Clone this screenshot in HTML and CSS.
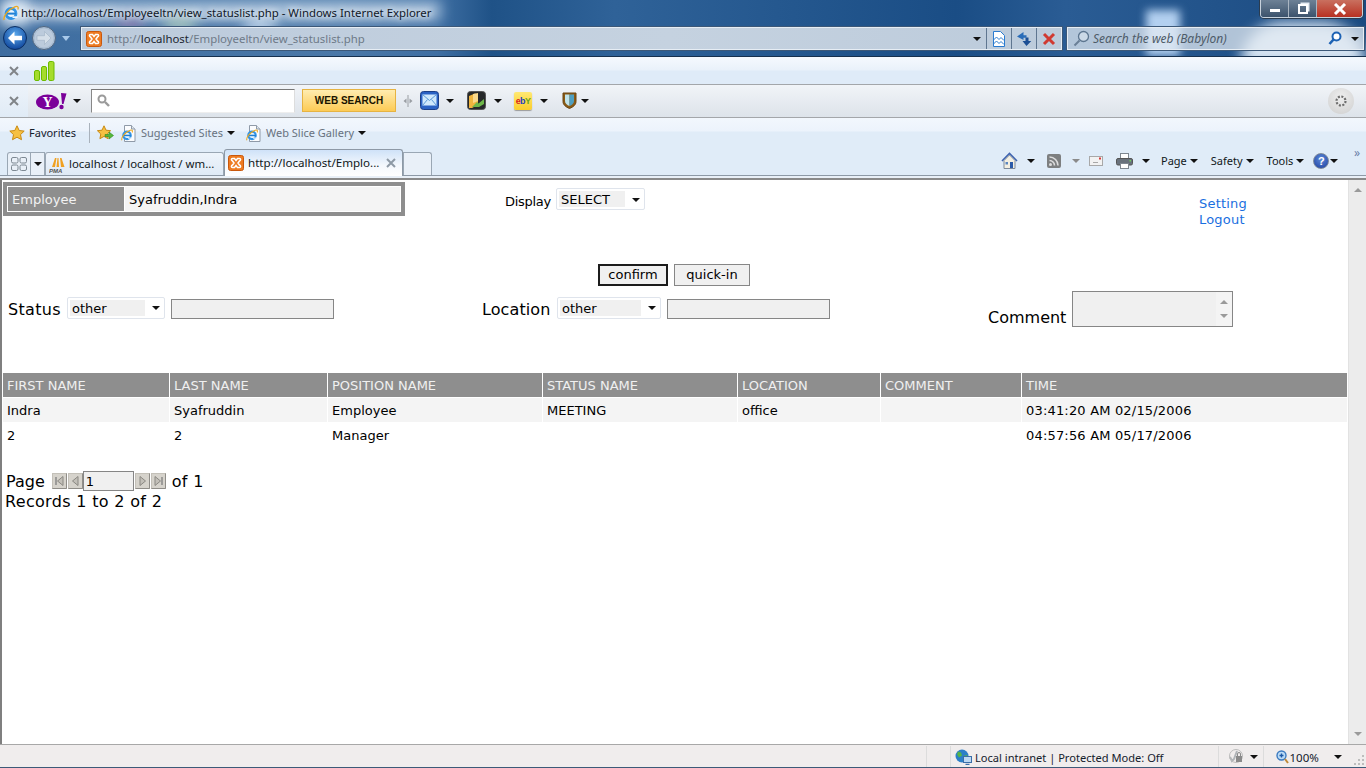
FILE: index.html
```html
<!DOCTYPE html>
<html lang="en">
<head>
    <meta charset="UTF-8">
    <meta name="viewport" content="width=device-width, initial-scale=1.0">
    <title>Employee Status List</title>
    <link rel="stylesheet" href="styles.css">
</head>
<body>
<svg class="defs" width="0" height="0">
    <symbol id="ie-e" viewBox="0 0 16 16">
        <circle cx="8" cy="8.500" r="5" fill="#eaf5fe" stroke="#2f93e6" stroke-width="2.800"/>
        <path d="M3.500 8.600h9.500" stroke="#1f7fd4" stroke-width="2"/>
        <path d="M9.500 11.300h5v1.700h-5z" fill="#eaf5fe"/>
        <path d="M1.200 15C-.2 11.500 5 4.500 12.300 1.600c2.500-.8 3.500.5 2.500 3" fill="none" stroke="#eca81e" stroke-width="1.400"/>
    </symbol>
    <symbol id="xampp" viewBox="0 0 16 16">
        <rect x=".5" y=".5" width="15" height="15" rx="2" fill="#ee7b22" stroke="#c9580d"/>
        <path d="M4.500 3.500h2L8 5.500l1.500-2h2c1.500 0 1.500 2 0 2.500L10 8l1.500 2c1.500.5 1.500 2.500 0 2.500h-2L8 10.500l-1.500 2h-2C3 12.500 3 10.500 4.500 10L6 8 4.500 6C3 5.500 3 3.500 4.500 3.500z" fill="none" stroke="#fff" stroke-width="1.500"/>
    </symbol>
    <symbol id="ie-doc" viewBox="0 0 16 17">
        <path d="M3.500.5h7l3.500 3.500v12.500h-10.500z" fill="#fbfcfe" stroke="#8f9aa8"/>
        <path d="M10.500.5v3.500h3.500" fill="#dfe6ee" stroke="#8f9aa8"/>
        <use href="#ie-e" x="0" y="4" width="12" height="12"/>
    </symbol>
    <symbol id="pg-btn" viewBox="0 0 15 16">
        <rect x=".5" y=".5" width="14" height="15" fill="#d6d3cc" stroke="#c3c0b8"/>
        <path d="M14.500.5v15h-14" fill="none" stroke="#8f8d88"/>
    </symbol>
</svg>

<header class="chrome">
    <div class="glass">
        <div class="blob blob-left"></div>
        <div class="blob blob-icon"></div>
        <div class="blob blob-purple"></div>
        <div class="blob blob-green"></div>
        <div class="blob blob-pale"></div>
        <div class="blob blob-window"></div>
        <div class="blob blob-dome"></div>
        <div class="title-row">
            <svg class="title-icon" width="16" height="16"><use href="#ie-e"/></svg>
            <span class="title-text">http://localhost/Employeeltn/view_statuslist.php - Windows Internet Explorer</span>
        </div>
        <div class="window-btns">
            <div class="win-btn win-min"><span class="min-bar"></span></div>
            <div class="win-btn win-max"><span class="max-box"></span></div>
            <div class="win-btn win-close">
                <svg width="14" height="12" viewBox="0 0 14 12"><path d="M2 1l10 10M12 1L2 11" stroke="#fff" stroke-width="3"/></svg>
            </div>
        </div>
        <div class="nav-row">
            <svg class="nav-back" width="24" height="24" viewBox="0 0 24 24">
                <defs>
                    <radialGradient id="backFill" cx=".5" cy=".35" r=".7"><stop offset="0" stop-color="#5aa8ec"/><stop offset="1" stop-color="#0a3f96"/></radialGradient>
                </defs>
                <circle cx="12" cy="12" r="11.500" fill="url(#backFill)" stroke="#0c2f62"/>
                <path d="M11.500 5.500L5 12l6.500 6.500v-4.200h7.500v-4.600h-7.500z" fill="#fff"/>
            </svg>
            <svg class="nav-forward" width="24" height="24" viewBox="0 0 24 24">
                <circle cx="12" cy="12" r="11.500" fill="#a9bdd3" stroke="#51667f"/>
                <circle cx="12" cy="12" r="9.500" fill="#bccbdc"/>
                <path d="M12.500 5.500L19 12l-6.500 6.500v-4.200H5V9.700h7.500z" fill="#d5dfe9" stroke="#9fb1c5" stroke-width=".6"/>
            </svg>
            <span class="nav-drop"></span>
            <div class="address">
                <svg class="addr-icon" width="16" height="16"><use href="#xampp"/></svg>
                <span class="addr-url">http://<b>localhost</b>/Employeeltn/view_statuslist.php</span>
                <span class="caret addr-caret"></span>
                <div class="addr-btn">
                    <svg width="16" height="16" viewBox="0 0 16 16"><path d="M2.500.5h7l4 4v11h-11z" fill="#fff" stroke="#2a7bd0"/><path d="M2.500 9l3-3 2.500 2.500 2-2 3 3M2.500 13l3-3 2.500 2.500 2-2 3 3" fill="none" stroke="#2a7bd0"/></svg>
                </div>
                <div class="addr-btn">
                    <svg width="16" height="16" viewBox="0 0 16 16"><path d="M7.500 1L1 5.500 7.500 9V6.800h3V4.200h-3z" fill="#2a6cb8"/><path d="M10.500 15l4.800-5h-2.800V6.500H9.500V10H6.500z" fill="#1d4f94"/></svg>
                </div>
                <div class="addr-btn">
                    <svg width="14" height="14" viewBox="0 0 14 14"><path d="M2 2l10 10M12 2L2 12" stroke="#d03a32" stroke-width="3"/></svg>
                </div>
            </div>
            <div class="search">
                <svg class="search-glass" width="17" height="17" viewBox="0 0 17 17"><circle cx="10.500" cy="6.500" r="5" fill="#dbe6f0" fill-opacity=".6" stroke="#5d7690" stroke-width="1.300"/><path d="M6.500 10.500L1.500 15.500" stroke="#6a7f96" stroke-width="2"/></svg>
                <span class="search-text">Search the web (Babylon)</span>
                <svg class="search-go" width="14" height="15" viewBox="0 0 14 15"><circle cx="8.500" cy="5.500" r="4" fill="#fff" stroke="#1d62b4" stroke-width="2"/><path d="M5.500 8.500L1.500 13" stroke="#1d62b4" stroke-width="2.600"/></svg>
                <span class="caret search-caret"></span>
            </div>
        </div>
    </div>

    <div class="bar bar-signal">
        <svg class="close-x" width="10" height="10" viewBox="0 0 10 10"><path d="M1 1l8 8M9 1L1 9" stroke="#808488" stroke-width="2"/></svg>
        <svg class="signal" width="21" height="20" viewBox="0 0 21 20">
            <rect x=".5" y="9.500" width="5" height="10" rx="1.500" fill="#a5dc2c" stroke="#6dbb00"/>
            <rect x="7.500" y="5.500" width="5" height="14" rx="1.500" fill="#a5dc2c" stroke="#6dbb00"/>
            <rect x="14.500" y=".5" width="5.500" height="19" rx="1.500" fill="#a5dc2c" stroke="#6dbb00"/>
        </svg>
    </div>

    <div class="bar bar-yahoo">
        <div class="close-zone">
            <svg width="10" height="10" viewBox="0 0 10 10"><path d="M1 1l8 8M9 1L1 9" stroke="#808488" stroke-width="2"/></svg>
        </div>
        <svg class="yahoo" width="31" height="18" viewBox="0 0 31 18">
            <ellipse cx="11.500" cy="10" rx="11.500" ry="7.500" fill="#7b0099"/>
            <text x="11.500" y="14.500" class="yahoo-y" text-anchor="middle">Y</text>
            <path d="M25 1l5.500.6-3 10.400h-1.500z" fill="#7b0099"/>
            <circle cx="25.500" cy="15" r="2.200" fill="#7b0099"/>
        </svg>
        <span class="caret yahoo-caret"></span>
        <div class="yahoo-input">
            <svg width="13" height="13" viewBox="0 0 13 13"><circle cx="5" cy="5" r="3.500" fill="none" stroke="#9a9a9a" stroke-width="2"/><path d="M8 8l4 4" stroke="#9a9a9a" stroke-width="2.400"/></svg>
        </div>
        <button class="web-search" type="button">WEB SEARCH</button>
        <svg class="grip" width="10" height="12" viewBox="0 0 10 12"><path d="M5 0v12" stroke="#9a9ea3"/><path d="M3.500 3.500L0.500 6l3 2.500zM6.500 3.500L9.500 6l-3 2.500z" fill="#9a9ea3"/></svg>
        <svg class="tool-mail" width="19" height="19" viewBox="0 0 19 19"><rect x=".5" y=".5" width="18" height="18" rx="3" fill="#2a62c4" stroke="#1c3f86"/><rect x="2.500" y="3.500" width="14" height="11" fill="#cfe8fb"/><path d="M2.500 3.500l7 6 7-6M2.500 14.500l5-6M16.500 14.500l-5-6" fill="none" stroke="#5c9ad8"/></svg>
        <span class="caret mail-caret"></span>
        <svg class="tool-folder" width="19" height="19" viewBox="0 0 19 19"><rect x=".5" y=".5" width="18" height="18" rx="3" fill="#26282a" stroke="#555"/><path d="M2 5l6-2.500 3 1.500v10l-6 3H2z" fill="#f1b53e"/><path d="M6 3l5-1v8l-5 2z" fill="#fbd98a"/><path d="M5 16l5-5 1.500 1.500L17 8v5l-5 3z" fill="#6eb74a"/></svg>
        <span class="caret folder-caret"></span>
        <div class="tool-ebay"><span class="e">e</span><span class="b">b</span><span class="y">Y</span></div>
        <span class="caret ebay-caret"></span>
        <svg class="tool-shield" width="15" height="17" viewBox="0 0 15 17"><path d="M1 1h13v8.500c0 3.500-3 5.500-6.500 7C4 15 1 13 1 9.500z" fill="#8a5a14" stroke="#6a4410"/><path d="M3 2.500h4.500v11.500C5 13 3 11.500 3 9z" fill="#bfe3ea"/><path d="M7.500 2.500H12V9c0 2.500-2 4-4.500 5z" fill="#4f9fc0"/></svg>
        <span class="caret shield-caret"></span>
        <div class="gear">
            <svg width="14" height="14" viewBox="0 0 14 14"><circle cx="7" cy="7" r="4.500" fill="none" stroke="#6d6d6d" stroke-width="2.200" stroke-dasharray="2 1.500"/></svg>
        </div>
    </div>

    <div class="bar-links">
        <div class="fav-row">
            <svg class="fav-star" width="16" height="16" viewBox="0 0 16 16"><path d="M8 .8l2.200 4.700 5 .6-3.700 3.500 1 5.100L8 12.200l-4.500 2.500 1-5.100L.8 6.100l5-.6z" fill="#f6c042" stroke="#c98a12"/></svg>
            <span class="fav-label">Favorites</span>
            <span class="fav-sep"></span>
            <svg class="fav-add" width="17" height="16" viewBox="0 0 17 16"><path d="M7 .8l2 4.400 4.600.5-3.400 3.300.9 4.700L7 11.400l-4.100 2.300.9-4.700L.4 5.700 5 5.200z" fill="#f6c042" stroke="#c98a12"/><path d="M8 9.500h4V7l4.500 3.500L12 14v-2.500H8z" fill="#55b83a" stroke="#2f8a1c" stroke-width=".6"/></svg>
            <svg class="fav-doc" width="16" height="17"><use href="#ie-doc"/></svg>
            <span class="fav-link fav-suggested">Suggested Sites</span>
            <span class="caret fav-caret"></span>
            <svg class="fav-doc fav-doc-two" width="16" height="17"><use href="#ie-doc"/></svg>
            <span class="fav-link fav-slice">Web Slice Gallery</span>
            <span class="caret fav-caret"></span>
        </div>
        <div class="tab-row">
            <div class="quick-tabs">
                <svg width="16" height="14" viewBox="0 0 16 14"><g fill="none" stroke="#7d8892"><rect x=".5" y=".5" width="6.500" height="5.500" rx="1.500"/><rect x="9" y=".5" width="6.500" height="5.500" rx="1.500"/><rect x=".5" y="8" width="6.500" height="5.500" rx="1.500"/><rect x="9" y="8" width="6.500" height="5.500" rx="1.500"/></g></svg>
            </div>
            <div class="quick-drop"><span class="caret"></span></div>
            <div class="tab">
                <svg class="tab-icon" width="17" height="17" viewBox="0 0 17 17"><path d="M3 11L6 2h1.500L6 11zM7.500 11L8.500 2h1l.5 9zM12 11L11 2h1.500L15.500 11z" fill="#f0a020"/><text x="0" y="16.500" class="pma">PMA</text></svg>
                <span class="tab-text tab-text-first">localhost / localhost / wm...</span>
            </div>
            <div class="tab tab-active">
                <svg class="tab-icon" width="16" height="16"><use href="#xampp"/></svg>
                <span class="tab-text">http://localhost/Emplo...</span>
                <svg class="tab-close" width="10" height="10" viewBox="0 0 10 10"><path d="M1 1l8 8M9 1L1 9" stroke="#8e9aa6" stroke-width="2"/></svg>
            </div>
            <div class="tab-new"></div>
            <div class="commands">
                <svg class="cmd-home" width="17" height="17" viewBox="0 0 17 17"><path d="M1 9L8.500 1.500 16 9" fill="none" stroke="#3d62b0" stroke-width="1.600"/><path d="M3 8.500v8h11v-8L8.500 3z" fill="#f3efe2" stroke="#7d8a9a"/><rect x="9" y="10" width="3" height="6" fill="#2a5aa8"/><rect x="4.500" y="10" width="2.500" height="2.500" fill="#5a86c0"/></svg>
                <span class="caret cmd-caret-home"></span>
                <svg class="cmd-rss" width="14" height="14" viewBox="0 0 14 14"><rect width="14" height="14" rx="2" fill="#7d7f80"/><circle cx="3.500" cy="10.500" r="1.500" fill="#ddd"/><path d="M2.500 6.500a5 5 0 0 1 5 5M2.500 3a8.500 8.500 0 0 1 8.500 8.500" fill="none" stroke="#ddd" stroke-width="1.600"/></svg>
                <span class="caret caret-dim cmd-caret-rss"></span>
                <svg class="cmd-read" width="14" height="10" viewBox="0 0 14 10"><rect x=".5" y=".5" width="13" height="9" fill="#f2f2f2" stroke="#a8a8a8"/><rect x="10" y="1.500" width="2" height="2" fill="#d83a3a"/><path d="M4 6.500h5" stroke="#a8a8a8"/></svg>
                <svg class="cmd-print" width="17" height="16" viewBox="0 0 17 16"><rect x="4.500" y=".5" width="8" height="6" fill="#fff" stroke="#7e8790"/><rect x=".5" y="5.500" width="16" height="6.500" rx="1.500" fill="#69727c" stroke="#555"/><rect x="4.500" y="10.500" width="8" height="5" fill="#fff" stroke="#7e8790"/><rect x="13.500" y="7" width="1.500" height="1.500" fill="#6fd05a"/></svg>
                <span class="caret cmd-caret-print"></span>
                <span class="cmd-label cmd-page">Page</span><span class="caret cmd-menu-caret"></span>
                <span class="cmd-label cmd-safety">Safety</span><span class="caret cmd-menu-caret"></span>
                <span class="cmd-label cmd-tools">Tools</span><span class="caret cmd-menu-caret"></span>
                <div class="cmd-help">?</div>
                <span class="caret cmd-caret-help"></span>
                <span class="cmd-more">&raquo;</span>
            </div>
        </div>
    </div>
    <div class="chrome-gap"></div>
</header>

<div class="viewport">
    <main class="page">
        <div class="top-row">
            <div class="employee">
                <div class="employee-label">Employee</div>
                <div class="employee-name">Syafruddin,Indra</div>
            </div>
            <div class="display">
                <span class="display-label">Display</span>
                <div class="select select-display"><span class="select-val">SELECT</span><span class="caret"></span></div>
            </div>
            <div class="links">
                <a href="#">Setting</a>
                <a href="#">Logout</a>
            </div>
        </div>

        <div class="actions">
            <button class="btn btn-confirm" type="button">confirm</button>
            <button class="btn" type="button">quick-in</button>
        </div>

        <form class="status-form">
            <div class="field">
                <label class="field-label label-status">Status</label>
                <div class="select select-status"><span class="select-val">other</span><span class="caret"></span></div>
                <input class="text-input" type="text">
            </div>
            <div class="field field-location">
                <label class="field-label label-location">Location</label>
                <div class="select select-location"><span class="select-val">other</span><span class="caret"></span></div>
                <input class="text-input" type="text">
            </div>
            <div class="field field-comment">
                <label class="field-label">Comment</label>
                <div class="comment-box">
                    <div class="comment-scroll"><span class="tri-up"></span><span class="tri-down"></span></div>
                </div>
            </div>
        </form>

        <table class="status-table">
            <colgroup>
                <col class="col-first"><col class="col-last"><col class="col-position"><col class="col-status"><col class="col-location"><col class="col-comment"><col class="col-time">
            </colgroup>
            <thead>
                <tr><th>FIRST NAME</th><th>LAST NAME</th><th>POSITION NAME</th><th>STATUS NAME</th><th>LOCATION</th><th>COMMENT</th><th>TIME</th></tr>
            </thead>
            <tbody>
                <tr class="odd"><td>Indra</td><td>Syafruddin</td><td>Employee</td><td>MEETING</td><td>office</td><td></td><td class="cell-time">03:41:20 AM 02/15/2006</td></tr>
                <tr><td>2</td><td>2</td><td>Manager</td><td></td><td></td><td></td><td class="cell-time">04:57:56 AM 05/17/2006</td></tr>
            </tbody>
        </table>

        <div class="pager">
            <span class="pager-page">Page</span>
            <svg class="pg-first" width="15" height="16" viewBox="0 0 15 16"><use href="#pg-btn"/><path d="M4 4v8" stroke="#888" stroke-width="1.500"/><path d="M11 3.500L5.500 8l5.500 4.500z" fill="#c2bfb8" stroke="#8a8882"/></svg>
            <svg class="pg-prev" width="15" height="16" viewBox="0 0 15 16"><use href="#pg-btn"/><path d="M10 3.500L4.500 8l5.500 4.500z" fill="#c2bfb8" stroke="#8a8882"/></svg>
            <input class="pager-input" type="text" value="1">
            <svg class="pg-next" width="15" height="16" viewBox="0 0 15 16"><use href="#pg-btn"/><path d="M5 3.500L10.500 8 5 12.500z" fill="#c2bfb8" stroke="#8a8882"/></svg>
            <svg class="pg-last" width="15" height="16" viewBox="0 0 15 16"><use href="#pg-btn"/><path d="M11 4v8" stroke="#888" stroke-width="1.500"/><path d="M4 3.500L9.500 8 4 12.500z" fill="#c2bfb8" stroke="#8a8882"/></svg>
            <span class="pager-of">of 1</span>
        </div>
        <div class="records">Records 1 to 2 of 2</div>
    </main>
    <div class="scrollbar">
        <span class="tri-up"></span>
        <span class="tri-down"></span>
    </div>
</div>

<footer class="statusbar">
    <span class="st-sep st-sep-a"></span>
    <span class="st-sep st-sep-b"></span>
    <svg class="st-globe" width="17" height="16" viewBox="0 0 17 16"><circle cx="7" cy="7" r="6.500" fill="#2b7fc8"/><path d="M3 2.500l3 1 1 3-3 2-2-3zM8 7l4-1 1 3-3 3z" fill="#56b548"/><rect x="8.500" y="7.500" width="8" height="6" fill="#bcd8f2" stroke="#3a6ea8"/><path d="M10.500 15.500h4" stroke="#3a6ea8" stroke-width="1.500"/></svg>
    <span class="st-zone">Local intranet | Protected Mode: Off</span>
    <span class="st-sep st-sep-c"></span>
    <svg class="st-lock" width="16" height="17" viewBox="0 0 16 17"><path d="M2 9l2 4 2-2 3-8" fill="none" stroke="#b0b4b8" stroke-width="2"/><circle cx="8" cy="8" r="6.500" fill="none" stroke="#bcbcbc"/><rect x="8" y="8" width="6" height="6" fill="#8a8a8a"/><path d="M9.500 8V6a1.500 1.500 0 0 1 3 0v2" fill="none" stroke="#8a8a8a"/></svg>
    <span class="caret st-caret-lock"></span>
    <span class="st-sep st-sep-d"></span>
    <svg class="st-zoom" width="13" height="14" viewBox="0 0 13 14"><circle cx="5.500" cy="5.500" r="4.500" fill="#bcdcf7" stroke="#3a7ac0" stroke-width="1.400"/><path d="M3.500 5.500h4M5.500 3.500v4" stroke="#1d5aa8" stroke-width="1.400"/><path d="M9 9l3 4" stroke="#c08a3a" stroke-width="2"/></svg>
    <span class="st-percent">100%</span>
    <span class="caret st-caret-zoom"></span>
    <svg class="st-grip" width="11" height="11" viewBox="0 0 11 11"><g fill="#bdbdbd"><rect x="8" y="0" width="2" height="2"/><rect x="4" y="4" width="2" height="2"/><rect x="8" y="4" width="2" height="2"/><rect x="0" y="8" width="2" height="2"/><rect x="4" y="8" width="2" height="2"/><rect x="8" y="8" width="2" height="2"/></g></svg>
</footer>
</body>
</html>
```

FILE: styles.css
```css
* {
    box-sizing: border-box;
}
html, body {
    margin: 0;
    height: 100%;
    overflow: hidden;
}
body {
    width: 1366px;
    height: 768px;
    display: flex;
    flex-direction: column;
    background: #fff;
    font-family: "DejaVu Sans", sans-serif;
    color: #000;
}
svg {
    flex: none;
}
.defs {
    position: absolute;
}
.caret {
    display: inline-block;
    width: 0;
    height: 0;
    flex: none;
    border-left: 4px solid transparent;
    border-right: 4px solid transparent;
    border-top: 4px solid #111;
}
.caret-dim {
    border-top-color: #8a8a8a;
}

/* window glass */
.chrome {
    flex: none;
    font-family: "Noto Sans", sans-serif;
    font-size: 11px;
}
.glass {
    position: relative;
    height: 57px;
    overflow: hidden;
    border-bottom: 1px solid #16304e;
    background: linear-gradient(90deg, #3e6da0 0%, #4a78a8 25%, #3f6fa3 32%, #1f5287 36%, #2f6298 45%, #1a4d85 70%, #2a5c94 78%, #1a4a80 100%);
}
.blob {
    position: absolute;
    filter: blur(7px);
}
.blob-left {
    left: 10px;
    top: 2px;
    width: 430px;
    height: 18px;
    background: rgba(205, 222, 240, .8);
}
.blob-icon {
    left: 0;
    top: 0;
    width: 28px;
    height: 24px;
    background: #e4eef8;
}
.blob-purple {
    left: 118px;
    top: 18px;
    width: 24px;
    height: 14px;
    background: #8a7fb0;
}
.blob-green {
    left: 165px;
    top: 18px;
    width: 30px;
    height: 12px;
    background: #b5d2c2;
}
.blob-pale {
    left: 245px;
    top: 18px;
    width: 30px;
    height: 14px;
    background: #c8dcf0;
}
.blob-window {
    left: 1146px;
    top: 10px;
    width: 34px;
    height: 46px;
    background: #b3d0f0;
    filter: blur(4px);
}
.blob-dome {
    left: 1240px;
    top: 22px;
    width: 126px;
    height: 44px;
    border-radius: 60px 60px 0 0;
    background: #d6e4f2;
}
.title-row {
    position: relative;
    height: 25px;
    display: flex;
    align-items: center;
    padding-left: 3px;
}
.title-text {
    margin-left: 2px;
    font-size: 11.4px;
    color: #101828;
    text-shadow: 0 0 6px #fff, 0 0 10px #fff;
    white-space: nowrap;
}
.window-btns {
    position: absolute;
    top: 0;
    left: 1260px;
    width: 103px;
    height: 18px;
    display: flex;
    border: 1px solid #c8d2dc;
    border-top: 0;
    border-radius: 0 0 4px 4px;
    overflow: hidden;
    box-shadow: 0 0 0 1px #2a3c50;
}
.win-btn {
    display: flex;
    align-items: center;
    justify-content: center;
    background: linear-gradient(#6d8196, #3c536c);
}
.win-min, .win-max {
    width: 28px;
    border-right: 1px solid #aab6c2;
}
.win-close {
    flex: 1;
    background: linear-gradient(#c9705f, #b83122);
}
.min-bar {
    width: 10px;
    height: 3px;
    margin-top: 4px;
    background: #fff;
}
.max-box {
    width: 10px;
    height: 10px;
    border: 2px solid #fff;
    box-shadow: 2px -2px 0 -0.5px #e5ecf3;
}
.nav-row {
    position: relative;
    height: 31px;
    display: flex;
    align-items: flex-start;
    padding: 1px 2px 0 3px;
}
.nav-forward {
    margin-left: 5px;
}
.nav-drop {
    width: 0;
    height: 0;
    margin: 10px 0 0 6px;
    border-left: 4px solid transparent;
    border-right: 4px solid transparent;
    border-top: 5px solid #a8c9ea;
}
.address {
    width: 981px;
    height: 23px;
    margin: 1px 0 0 11px;
    display: flex;
    align-items: center;
    padding-left: 4px;
    border: 1px solid #e6edf4;
    box-shadow: 0 0 0 1px #3c5878;
    background: linear-gradient(90deg, #bccbdc, #c5d2e0 60%, #bccbdb);
}
.addr-url {
    margin-left: 5px;
    font-size: 11.4px;
    color: #6e7a88;
}
.addr-url b {
    font-weight: normal;
    color: #1c2630;
}
.addr-caret {
    margin-left: auto;
    margin-right: 5px;
}
.addr-btn {
    width: 25px;
    height: 21px;
    display: flex;
    align-items: center;
    justify-content: center;
    border-left: 1px solid #5f7690;
}
.search {
    width: 297px;
    height: 23px;
    margin: 1px 0 0 5px;
    display: flex;
    align-items: center;
    padding-left: 5px;
    border: 1px solid #e6edf4;
    box-shadow: 0 0 0 1px #3c5878;
    background: rgba(225, 233, 242, .75);
}
.search-text {
    margin-left: 3px;
    font-size: 12px;
    font-style: italic;
    color: #4e5b68;
}
.search-go {
    margin-left: auto;
}
.search-caret {
    margin: 0 4px 0 9px;
}

/* toolbars */
.bar {
    display: flex;
    align-items: center;
    border-bottom: 1px solid #a3a6aa;
}
.bar-signal {
    height: 28px;
    padding-left: 9px;
    background: linear-gradient(#f5f9fe 0, #e9f1fa 13px, #dfebf8 14px, #dfebf8 100%);
}
.signal {
    margin-left: 15px;
    margin-top: 1px;
}
.bar-yahoo {
    height: 33px;
    padding-bottom: 1px;
    background: linear-gradient(#f1f4f8, #dde3ea);
}
.close-zone {
    width: 28px;
    height: 32px;
    margin-bottom: -1px;
    display: flex;
    align-items: center;
    padding-left: 9px;
    background: linear-gradient(#edf3fa, #e0ebf6);
}
.yahoo {
    margin-left: 8px;
    margin-top: 1px;
}
.yahoo-y {
    font-family: "Liberation Serif", serif;
    font-size: 14px;
    font-weight: bold;
    fill: #fff;
}
.yahoo-caret {
    margin-left: 6px;
}
.yahoo-input {
    width: 204px;
    height: 24px;
    margin-left: 10px;
    display: flex;
    align-items: center;
    padding-left: 5px;
    background: #fff;
    border-top: 1px solid #777;
    border-left: 1px solid #888;
    border-right: 1px solid #ddd;
    border-bottom: 1px solid #eee;
}
.web-search {
    width: 94px;
    height: 23px;
    margin-left: 7px;
    padding: 0;
    border: 1px solid #e6b342;
    background: linear-gradient(#ffecb0, #fdcb55);
    font-family: "Liberation Sans", sans-serif;
    font-size: 10px;
    font-weight: bold;
    color: #1a1400;
}
.grip {
    margin-left: 7px;
}
.tool-mail {
    margin-left: 7px;
}
.mail-caret {
    margin-left: 7px;
}
.tool-folder {
    margin-left: 13px;
}
.folder-caret {
    margin-left: 8px;
}
.tool-ebay {
    width: 18px;
    height: 18px;
    margin-left: 12px;
    display: flex;
    align-items: center;
    justify-content: center;
    border-radius: 2px;
    background: linear-gradient(#ffe873, #fbce2c);
    box-shadow: 0 1px 1px #999;
    font-family: "Liberation Sans", sans-serif;
    font-size: 9px;
    font-weight: bold;
    letter-spacing: -.6px;
}
.tool-ebay .e {
    color: #d8261c;
}
.tool-ebay .b {
    color: #1a3fc0;
}
.tool-ebay .y {
    color: #6aa51a;
}
.ebay-caret {
    margin-left: 8px;
}
.tool-shield {
    margin-left: 14px;
}
.shield-caret {
    margin-left: 4px;
}
.gear {
    width: 26px;
    height: 26px;
    margin-left: auto;
    margin-right: 12px;
    display: flex;
    align-items: center;
    justify-content: center;
    border-radius: 50%;
    background: radial-gradient(circle at 50% 35%, #eeeeee, #cfcfcf);
}

/* favorites and tabs */
.bar-links {
    height: 58px;
    border-bottom: 1px solid #8d99a6;
    background: linear-gradient(#f2f7fd 0, #ecf3fc 13px, #e0ecf8 14px, #e0ecf8 100%);
}
.fav-row {
    height: 30px;
    display: flex;
    align-items: center;
    padding-left: 9px;
    color: #16202c;
}
.fav-label {
    margin: -2px 0 0 4px;
}
.fav-sep {
    width: 1px;
    height: 20px;
    margin-left: 13px;
    background: #a9b2bc;
}
.fav-add {
    margin-left: 7px;
}
.fav-doc {
    margin-left: 7px;
}
.fav-doc-two {
    margin-left: 11px;
}
.fav-link {
    margin: -2px 0 0 4px;
    color: #68727e;
}
.fav-caret {
    margin-left: 4px;
}
.tab-row {
    height: 27px;
    display: flex;
    align-items: flex-end;
    padding-left: 7px;
}
.quick-tabs, .quick-drop, .tab, .tab-new {
    height: 23px;
    display: flex;
    align-items: center;
    border: 1px solid #9aa7b4;
    border-bottom: 0;
}
.quick-tabs {
    width: 24px;
    justify-content: center;
    border-radius: 3px 0 0 0;
    background: #e9f0f8;
}
.quick-drop {
    width: 15px;
    margin-left: -1px;
    justify-content: center;
    background: #e9f0f8;
}
.tab {
    width: 179px;
    padding-left: 3px;
    border-radius: 3px 3px 0 0;
    background: linear-gradient(#eef4fb, #dfeaf6);
    color: #101820;
}
.tab-text {
    margin: -2px 0 0 4px;
    font-size: 11.6px;
    white-space: nowrap;
}
.tab-text-first {
    margin-left: 3px;
    font-size: 11.4px;
}
.pma {
    font-family: "Liberation Sans", sans-serif;
    font-size: 6px;
    font-style: italic;
    font-weight: bold;
    fill: #555;
}
.tab-active {
    height: 27px;
    margin-bottom: -1px;
    position: relative;
    background: linear-gradient(#cfe2f8, #f4f8fd 60%, #fff);
    border-color: #8d99a6;
}
.tab-close {
    margin-left: auto;
    margin-right: 6px;
}
.tab-new {
    width: 29px;
    border-radius: 0 3px 0 0;
    background: #e9f0f8;
}
.commands {
    flex: 1;
    height: 27px;
    display: flex;
    align-items: center;
    padding-bottom: 2px;
    position: relative;
    color: #101820;
}
.cmd-home {
    margin-left: 569px;
}
.cmd-caret-home {
    margin-left: 9px;
}
.cmd-rss {
    margin-left: 12px;
}
.cmd-caret-rss {
    margin-left: 11px;
}
.cmd-read {
    margin-left: 9px;
}
.cmd-print {
    margin-left: 13px;
}
.cmd-caret-print {
    margin-left: 9px;
}
.cmd-label {
    white-space: nowrap;
}
.cmd-page {
    margin-left: 11px;
}
.cmd-safety, .cmd-tools {
    margin-left: 13px;
}
.cmd-menu-caret {
    margin-left: 3px;
}
.cmd-help {
    width: 16px;
    height: 16px;
    margin-left: 9px;
    border-radius: 50%;
    border: 1px solid #7d8a9a;
    background: radial-gradient(circle at 50% 35%, #5d8ad8, #1c3fa0);
    color: #fff;
    font-family: "Liberation Sans", sans-serif;
    font-size: 11px;
    font-weight: bold;
    line-height: 14px;
    text-align: center;
}
.cmd-caret-help {
    margin-left: 1px;
}
.cmd-more {
    position: absolute;
    right: 6px;
    top: -4px;
    font-size: 12px;
    color: #6b7ea8;
}
.chrome-gap {
    height: 4px;
    background: #e9f0f8;
    border-bottom: 2px solid #8a8a8a;
}

/* page */
.viewport {
    flex: 1;
    display: flex;
    min-height: 0;
}
.page {
    flex: 1;
    min-width: 0;
    border-left: 2px solid #7f7f7f;
    font-size: 13px;
}
.top-row {
    height: 84px;
    display: flex;
    align-items: flex-start;
}
.employee {
    width: 402px;
    height: 34px;
    margin: 2px 0 0 1px;
    display: flex;
    gap: 1px;
    padding: 1px;
    border: 4px solid #8e8e8e;
    background: #fff;
}
.employee-label {
    width: 116px;
    padding: 1px 0 0 4px;
    line-height: 24px;
    background: #8e8e8e;
    color: #f2f2f2;
}
.employee-name {
    flex: 1;
    padding: 1px 0 0 4px;
    line-height: 24px;
    background: #f4f4f4;
}
.display {
    display: flex;
    align-items: center;
    gap: 5px;
    margin: 8px 0 0 100px;
}
.display-label {
    width: 46px;
    margin-top: 5px;
    letter-spacing: -.3px;
}
.select {
    height: 22px;
    display: flex;
    align-items: center;
    padding-left: 2px;
    border: 1px solid #dfe4ec;
    border-radius: 2px;
    background: #fff;
}
.select-val {
    height: 16px;
    padding-left: 2px;
    line-height: 17px;
    background: #f0f0f0;
}
.select .caret {
    margin-left: 7px;
    margin-top: 1px;
}
.select-display {
    width: 89px;
}
.select-display .select-val {
    width: 66px;
}
.select-status {
    width: 98px;
}
.select-status .select-val {
    width: 75px;
}
.select-location {
    width: 104px;
}
.select-location .select-val {
    width: 81px;
}
.links {
    margin: 16px 0 0 554px;
    display: flex;
    flex-direction: column;
    line-height: 16px;
    letter-spacing: .2px;
}
.links a {
    color: #1a6fe0;
    text-decoration: none;
}
.actions {
    display: flex;
    justify-content: center;
    gap: 6px;
    padding-right: 2px;
}
.btn {
    width: 76px;
    height: 22px;
    padding: 0 0 2px;
    border: 1px solid #868686;
    background: #f0f0f0;
    font-family: "DejaVu Sans", sans-serif;
    font-size: 13px;
}
.btn-confirm {
    width: 70px;
    border: 2px solid #1c1c1c;
}
.status-form {
    height: 36px;
    margin-top: 5px;
    display: flex;
    padding-left: 6px;
}
.field {
    display: flex;
    align-items: center;
    gap: 6px;
    margin-top: -3px;
}
.field-location {
    margin-left: 148px;
}
.field-comment {
    margin-left: 158px;
    margin-top: 0;
}
.field-label {
    font-size: 16px;
}
.label-status, .label-location {
    margin-top: 3px;
}
.label-status {
    width: 53px;
    letter-spacing: .3px;
}
.label-location {
    width: 69px;
    letter-spacing: .1px;
}
.field-comment .field-label {
    margin-top: 16px;
}
.text-input {
    width: 163px;
    height: 20px;
    margin: 2px 0 0;
    padding: 0 2px;
    border: 1px solid #868686;
    background: #f0f0f0;
}
.comment-box {
    width: 161px;
    height: 36px;
    display: flex;
    justify-content: flex-end;
    border: 1px solid #868686;
    background: #f0f0f0;
}
.comment-scroll {
    width: 16px;
    display: flex;
    flex-direction: column;
    align-items: center;
    justify-content: space-between;
    padding: 8px 0;
    background: #f4f4f4;
}
.tri-up, .tri-down {
    width: 0;
    height: 0;
    border-left: 4px solid transparent;
    border-right: 4px solid transparent;
}
.tri-up {
    border-bottom: 4px solid #9a9a9a;
}
.tri-down {
    border-top: 4px solid #9a9a9a;
}
.status-table {
    width: 1346px;
    margin-top: 45px;
    table-layout: fixed;
    border-collapse: separate;
    border-spacing: 1px;
    font-size: 13px;
}
.col-first { width: 166px; }
.col-last { width: 157px; }
.col-position { width: 214px; }
.col-status { width: 194px; }
.col-location { width: 142px; }
.col-comment { width: 140px; }
.col-time { width: 325px; }
.status-table th, .status-table td {
    height: 24px;
    padding: 0 0 0 4px;
    text-align: left;
    font-weight: normal;
    white-space: nowrap;
}
.status-table th {
    background: #8e8e8e;
    color: #f0f0f0;
}
.status-table .odd td {
    background: #f4f4f4;
}
.status-table .cell-time {
    letter-spacing: .18px;
}
.pager {
    height: 20px;
    margin: 23px 0 0 4px;
    display: flex;
    align-items: center;
    font-size: 16px;
}
.pg-first {
    margin-left: 7px;
}
.pg-prev {
    margin-left: 1px;
}
.pager-input {
    width: 51px;
    height: 20px;
    margin: 0;
    padding: 0 2px;
    border: 1px solid #868686;
    background: #f0f0f0;
    font-family: "DejaVu Sans", sans-serif;
    font-size: 13px;
}
.pg-next {
    margin-left: 1px;
}
.pg-last {
    margin-left: 1px;
}
.pager-of {
    margin-left: 6px;
    letter-spacing: .3px;
}
.records {
    margin: 1px 0 0 3px;
    font-size: 16px;
    line-height: 20px;
    letter-spacing: .32px;
}
.scrollbar {
    flex: none;
    width: 18px;
    display: flex;
    flex-direction: column;
    align-items: center;
    justify-content: space-between;
    padding: 8px 0;
    background: #ececec;
    border-left: 1px solid #e2e2e2;
}

/* status bar */
.statusbar {
    flex: none;
    height: 24px;
    display: flex;
    align-items: center;
    padding-top: 1px;
    border-top: 1px solid #a8a8a8;
    border-bottom: 1px solid #3d5a78;
    background: #f0eded;
    font-family: "Noto Sans", sans-serif;
    font-size: 11px;
    color: #14202c;
}
.st-sep {
    width: 1px;
    height: 21px;
    background: #dcdcdc;
}
.st-sep-a {
    margin-left: 926px;
}
.st-sep-b {
    margin-left: 23px;
}
.st-globe {
    margin-left: 4px;
}
.st-zone {
    margin: 2px 0 0 3px;
    font-size: 11.1px;
    white-space: nowrap;
}
.st-sep-c {
    margin-left: 55px;
}
.st-lock {
    margin-left: 9px;
}
.st-caret-lock {
    margin-left: 6px;
}
.st-sep-d {
    margin-left: 5px;
}
.st-zoom {
    margin-left: 12px;
}
.st-percent {
    margin-top: 1px;
    font-size: 11.5px;
}
.st-caret-zoom {
    margin-left: 15px;
}
.st-grip {
    margin-left: 12px;
    margin-top: 8px;
}
```
